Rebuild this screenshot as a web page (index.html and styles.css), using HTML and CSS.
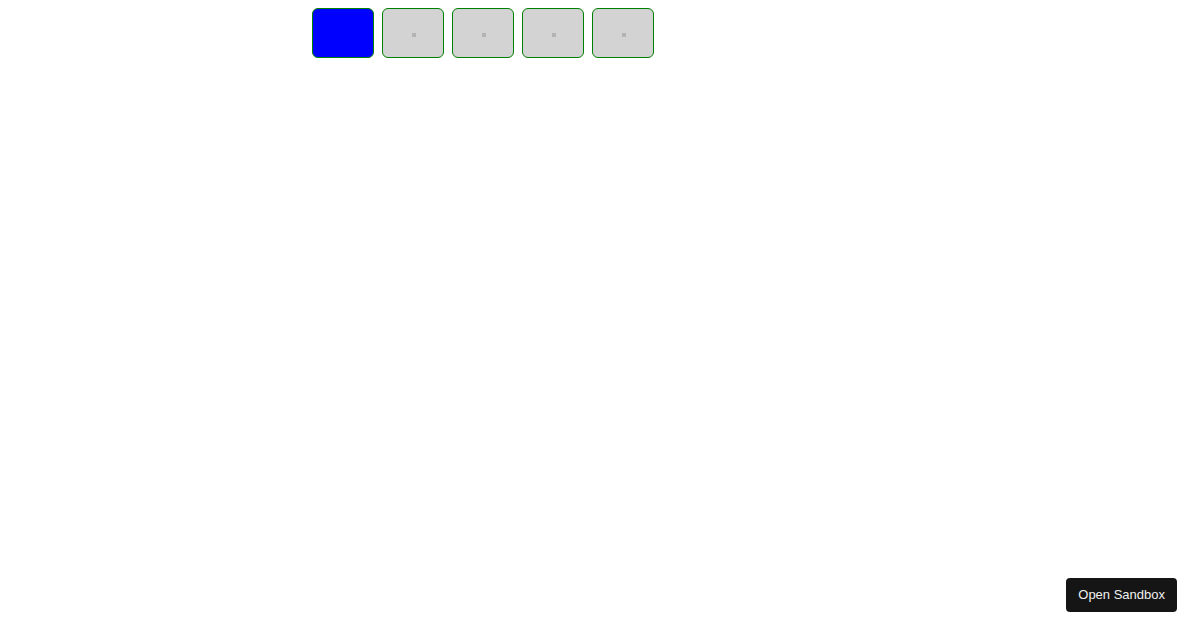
FILE: index.html
```html
<!DOCTYPE html>
<html>
<head>
<meta charset="utf-8">
<link rel="stylesheet" href="styles.css">
</head>
<body>
<div class="row">
  <div class="cell active"></div>
  <div class="cell"><span class="dot"></span></div>
  <div class="cell"><span class="dot"></span></div>
  <div class="cell"><span class="dot"></span></div>
  <div class="cell"><span class="dot"></span></div>
</div>
<button class="sandbox">Open Sandbox</button>
</body>
</html>
```

FILE: styles.css
```css
html, body { margin: 0; padding: 0; background: #fff; }
body { width: 1200px; height: 630px; position: relative; overflow: hidden; font-family: "Liberation Sans", Arial, sans-serif; }
.row { display: flex; gap: 8px; padding: 8px 0 0 312px; }
.cell {
  width: 60px; height: 48px;
  border: 1px solid #008000; border-radius: 6px;
  background: #d3d3d3;
  display: flex; align-items: center; justify-content: center;
}
.cell.active { background: #0000ff; }
.dot { width: 4px; height: 4px; background: #b3b3b3; margin-top: 3px; margin-left: 2px; }
.sandbox {
  position: absolute; right: 23px; bottom: 18px;
  height: 34px; padding: 0 12px 2px;
  background: #151515; color: #f0f0f0;
  border: none; border-radius: 4px;
  font-family: "Liberation Sans", Arial, sans-serif; font-size: 13px;
}
```
